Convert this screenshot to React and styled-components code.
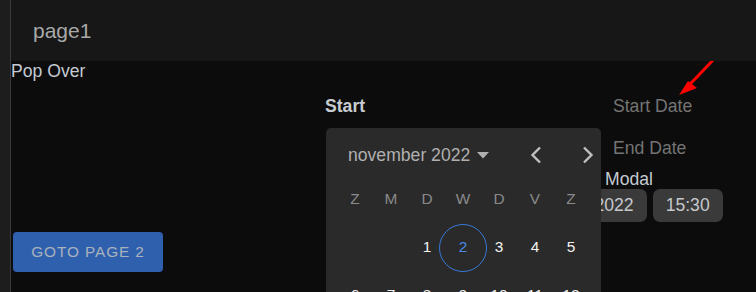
import React from "react";
import styled, { createGlobalStyle } from "styled-components";

const Global = createGlobalStyle`
  html, body { margin: 0; padding: 0; background: #0c0c0c; overflow: hidden; }
  body { font-family: "Liberation Sans", Arial, sans-serif; }
  * { box-sizing: border-box; }
`;

const Shell = styled.div`
  display: flex;
  min-height: 100vh;
`;

const Sidebar = styled.aside`
  width: 11px;
  flex: none;
  background: #1d1d1d;
  border-right: 1px solid #3a3a3a;
`;

const Main = styled.div`
  flex: 1;
  display: flex;
  flex-direction: column;
  min-width: 0;
`;

const Header = styled.header`
  height: 61px;
  flex: none;
  background: #171717;
  display: flex;
  align-items: center;
  padding-left: 22px;
`;

const Title = styled.h1`
  margin: 0;
  font-weight: 400;
  font-size: 21px;
  color: #a9a9a9;
  line-height: 1;
  padding-bottom: 1px;
`;

const Content = styled.main`
  position: relative;
  flex: 1;
  background: #0c0c0c;
  overflow: hidden;
`;

const PopOverLabel = styled.div`
  font-size: 17.6px;
  line-height: 20px;
  color: #c4cad2;
`;

const PickerArea = styled.section`
  display: flex;
  margin: 14.5px 0 0 314px;
`;

const LeftCol = styled.div`
  position: relative;
  width: 276px;
  flex: none;
`;

const FieldLabel = styled.div`
  font-size: 17.6px;
  line-height: 20px;
  font-weight: 700;
  color: #c8ccd0;
`;

const RightCol = styled.div`
  display: flex;
  flex-direction: column;
  align-items: flex-start;
  margin-left: 12px;
`;

const LinkList = styled.div`
  display: flex;
  flex-direction: column;
  gap: 22.5px;
`;

const LinkItem = styled.span`
  font-size: 17.6px;
  line-height: 20px;
  color: #747474;
`;

const ModalBlock = styled.div`
  display: flex;
  flex-direction: column;
  align-items: flex-start;
  margin-top: 10.5px;
`;

const ModalLabel = styled.div`
  font-size: 17.6px;
  line-height: 20px;
  color: #c4cad2;
  margin-left: -8px;
`;

const ChipRow = styled.div`
  display: flex;
  gap: 6px;
  margin-left: -83px;
`;

const Chip = styled.span`
  height: 33px;
  padding: 0 13px;
  border-radius: 7px;
  background: #3a3a3a;
  color: #c5c8cc;
  font-size: 17.6px;
  display: flex;
  align-items: center;
  white-space: nowrap;
`;

const GotoButton = styled.button`
  margin: 10.5px 0 0 2px;
  width: 150px;
  height: 40px;
  border: none;
  border-radius: 4px;
  background: #2f60ad;
  color: #a9b2bd;
  font-family: "Liberation Sans", Arial, sans-serif;
  font-size: 15.4px;
  letter-spacing: 0.9px;
  text-transform: uppercase;
  padding: 0;
`;

const CalAnchor = styled.div`
  position: absolute;
  left: 315px;
  top: 67px;
`;

const Calendar = styled.div`
  width: 275px;
  height: 360px;
  background: #2a2a2a;
  border-radius: 5px;
  padding-top: 7px;
`;

const CalHeader = styled.div`
  height: 40px;
  display: flex;
  align-items: center;
  justify-content: space-between;
  padding-left: 22px;
`;

const MonthButton = styled.div`
  display: flex;
  align-items: center;
  gap: 7px;
  font-size: 17.6px;
  color: #b0b0b0;
`;

const NavGroup = styled.div`
  display: flex;
  gap: 26px;
`;

const NavButton = styled.span`
  width: 26px;
  height: 26px;
  display: flex;
  align-items: center;
  justify-content: center;
`;

const Grid = styled.div`
  display: grid;
  grid-template-columns: repeat(7, 36px);
  grid-auto-rows: 48px;
  padding-left: 11px;
`;

const WeekDay = styled.span`
  display: flex;
  align-items: center;
  justify-content: center;
  font-size: 15.4px;
  color: #8a8a8a;
`;

const Day = styled.span`
  position: relative;
  display: flex;
  align-items: center;
  justify-content: center;
  font-size: 15.4px;
  color: ${(p) => (p.$selected ? "#4a8ae8" : "#f2f2f2")};
  &::before {
    content: "";
    display: ${(p) => (p.$selected ? "block" : "none")};
    position: absolute;
    left: 50%;
    top: 50%;
    width: 46px;
    height: 46px;
    margin: -23px 0 0 -24px;
    border: 1px solid #3878d8;
    border-radius: 50%;
  }
`;

const Arrow = styled.svg`
  position: absolute;
  left: 659px;
  top: -11px;
  pointer-events: none;
`;

const weekDays = ["Z", "M", "D", "W", "D", "V", "Z"];
const days = [null, null, 1, 2, 3, 4, 5, 6, 7, 8, 9, 10, 11, 12, 13, 14, 15, 16, 17, 18, 19];

function PickerOverlay() {
  return (
    <CalAnchor>
      <Calendar>
        <CalHeader>
          <MonthButton>
            november 2022
            <svg width="12" height="7" viewBox="0 0 12 7">
              <polygon points="0,0 12,0 6,6.5" fill="#b0b0b0" />
            </svg>
          </MonthButton>
          <NavGroup>
            <NavButton>
              <svg width="12" height="18" viewBox="0 0 12 18">
                <polyline points="10,1.5 2.5,9 10,16.5" fill="none" stroke="#c0c0c0" strokeWidth="2.4" />
              </svg>
            </NavButton>
            <NavButton>
              <svg width="12" height="18" viewBox="0 0 12 18">
                <polyline points="2,1.5 9.5,9 2,16.5" fill="none" stroke="#c0c0c0" strokeWidth="2.4" />
              </svg>
            </NavButton>
          </NavGroup>
        </CalHeader>
        <Grid>
          {weekDays.map((d, i) => (
            <WeekDay key={"w" + i}>{d}</WeekDay>
          ))}
          {days.map((d, i) => (
            <Day key={"d" + i} $selected={d === 2}>
              {d}
            </Day>
          ))}
        </Grid>
      </Calendar>
    </CalAnchor>
  );
}

export default function App() {
  return (
    <>
      <Global />
      <Shell>
        <Sidebar />
        <Main>
          <Header>
            <Title>page1</Title>
          </Header>
          <Content>
            <PopOverLabel>Pop Over</PopOverLabel>
            <PickerArea>
              <LeftCol>
                <FieldLabel>Start</FieldLabel>
              </LeftCol>
              <RightCol>
                <LinkList>
                  <LinkItem>Start Date</LinkItem>
                  <LinkItem>End Date</LinkItem>
                </LinkList>
                <ModalBlock>
                  <ModalLabel>Modal</ModalLabel>
                  <ChipRow>
                    <Chip>2 nov. 2022</Chip>
                    <Chip>15:30</Chip>
                  </ChipRow>
                </ModalBlock>
              </RightCol>
            </PickerArea>
            <GotoButton>Goto page 2</GotoButton>
            <PickerOverlay />
            <Arrow width="60" height="50" viewBox="0 0 60 50">
              <line x1="44" y1="9" x2="27" y2="27" stroke="#ff0000" strokeWidth="3" strokeLinecap="round" />
              <polygon points="9,45 18,31 27,38" fill="#ff0000" />
              <line x1="27" y1="27" x2="14" y2="40" stroke="#ff0000" strokeWidth="3" />
            </Arrow>
          </Content>
        </Main>
      </Shell>
    </>
  );
}
